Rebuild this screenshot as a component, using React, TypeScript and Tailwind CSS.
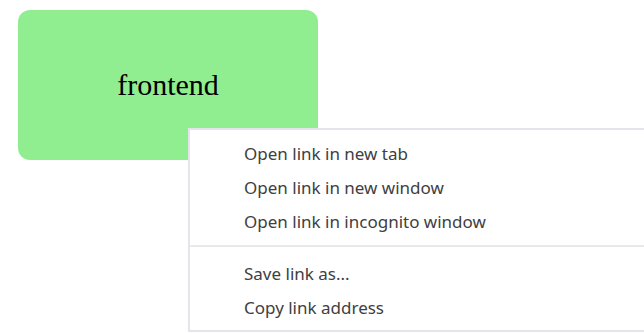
import React from 'react';

const groups: string[][] = [
  ['Open link in new tab', 'Open link in new window', 'Open link in incognito window'],
  ['Save link as...', 'Copy link address'],
];

const App: React.FC = () => {
  return (
    <div className="relative w-[644px] h-[333px] overflow-hidden bg-white">
      {/* node box */}
      <div className="ml-[18px] mt-[10px] w-[300px] h-[150px] rounded-[12px] bg-[#90ee90] flex items-center justify-center">
        <span className="text-[30px] text-black pb-[2px]" style={{ fontFamily: '"Liberation Serif", serif' }}>
          frontend
        </span>
      </div>

      {/* context menu */}
      <div
        className="absolute left-[188px] top-[128px] w-[480px] bg-white border-2 border-[#e4e4ea] pt-[7px] pb-[5px]"
        style={{ fontFamily: '"Noto Sans", sans-serif' }}
      >
        {groups.map((items, gi) => (
          <div key={gi}>
            {gi > 0 && <div className="my-[6px] h-[2px] bg-[#e8e8ed]" />}
            <div className={gi === 0 ? 'pb-[0px]' : 'pt-[4px]'}>
              {items.map((label) => (
                <div key={label} className="h-[34px] flex items-center pl-[54px] text-[17px] text-[#404040]">
                  {label}
                </div>
              ))}
            </div>
          </div>
        ))}
      </div>
    </div>
  );
};

export default App;
